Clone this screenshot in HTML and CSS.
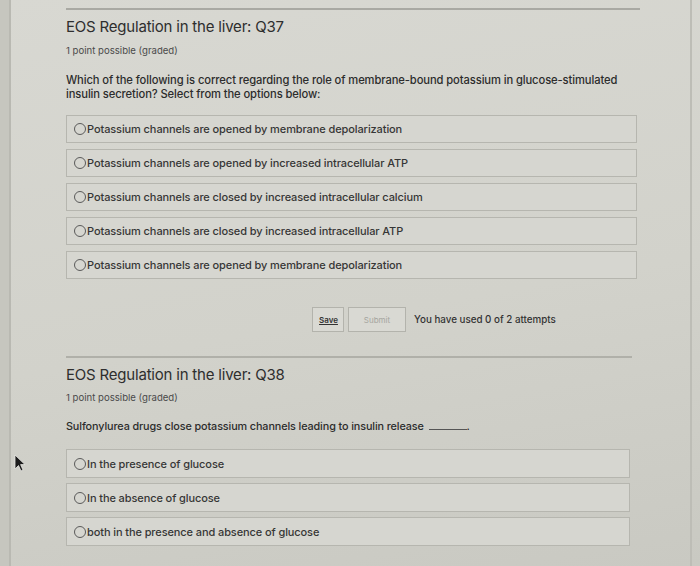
FILE: index.html
```html
<!DOCTYPE html>
<html lang="en">
<head>
    <meta charset="UTF-8">
    <meta name="viewport" content="width=device-width, initial-scale=1.0">
    <title>EOS Regulation in the liver</title>
    <link rel="stylesheet" href="styles.css">
</head>
<body>
    <div class="screen">
        <div class="side"></div>
        <div class="course">
            <div class="problem first">
                <h2>EOS Regulation in the liver: Q37</h2>
                <div class="meta">1 point possible (graded)</div>
                <p class="prompt">Which of the following is correct regarding the role of membrane-bound potassium in glucose-stimulated insulin secretion? Select from the options below:</p>
                <div class="choices">
                    <label class="choice"><span class="radio"></span>Potassium channels are opened by membrane depolarization</label>
                    <label class="choice"><span class="radio"></span>Potassium channels are opened by increased intracellular ATP</label>
                    <label class="choice"><span class="radio"></span>Potassium channels are closed by increased intracellular calcium</label>
                    <label class="choice"><span class="radio"></span>Potassium channels are closed by increased intracellular ATP</label>
                    <label class="choice"><span class="radio"></span>Potassium channels are opened by membrane depolarization</label>
                </div>
                <div class="actions">
                    <button class="save-button">Save</button>
                    <button class="submit-button">Submit</button>
                    <span class="attempts">You have used 0 of 2 attempts</span>
                </div>
            </div>
            <div class="problem second">
                <h2>EOS Regulation in the liver: Q38</h2>
                <div class="meta">1 point possible (graded)</div>
                <p class="prompt">Sulfonylurea drugs close potassium channels leading to insulin release <span class="blank"></span>.</p>
                <div class="choices">
                    <label class="choice"><span class="radio"></span>In the presence of glucose</label>
                    <label class="choice"><span class="radio"></span>In the absence of glucose</label>
                    <label class="choice"><span class="radio"></span>both in the presence and absence of glucose</label>
                </div>
            </div>
        </div>
    </div>
    <svg class="cursor" width="12" height="18" viewBox="0 0 12 18">
        <path d="M1 1 L1 15 L4.5 11.5 L7 17 L9 16 L6.6 10.6 L11 10.6 Z" fill="#1c1c1c" stroke="#e8e8e4" stroke-width="0.8"/>
    </svg>
</body>
</html>
```

FILE: styles.css
```css
body {
    margin: 0;
    font-family: 'Inter', 'Open Sans', sans-serif;
    color: #363636;
    background: linear-gradient(170deg, #d8d8d2 0%, #d2d2cb 55%, #c9c9c2 100%);
    height: 566px;
    overflow: hidden;
}
.screen {
    display: flex;
    height: 566px;
}
.side {
    width: 9px;
    background-color: #c6c6bf;
    border-right: 2px solid #b9b9b2;
}
.course {
    flex: 1;
    padding-left: 55px;
    border-right: 2px solid #bdbdb6;
    margin-right: 8px;
}
.problem {
    width: 574px;
}
.problem.first {
    margin-top: 8px;
    border-top: 2px solid #a9a9a3;
    padding-top: 8px;
}
.problem.second {
    width: 566px;
    margin-top: 24px;
    border-top: 2px solid #b0b0a9;
    padding-top: 8px;
}
h2 {
    margin: 0;
    font-size: 15px;
    font-weight: 400;
    line-height: 18px;
    color: #2e2e2e;
    letter-spacing: -0.2px;
}
.meta {
    margin-top: 9px;
    font-size: 9.6px;
    line-height: 12px;
    color: #4a4a4a;
}
.prompt {
    margin: 16px 0 0;
    font-size: 11.2px;
    font-weight: 500;
    line-height: 14px;
    color: #2c2c2c;
    letter-spacing: -0.1px;
}
.second .meta {
    margin-top: 8px;
}
.second .prompt {
    margin-top: 16px;
    font-size: 10.8px;
}
.blank {
    display: inline-block;
    width: 38px;
    border-bottom: 1px solid #555;
    margin-left: 2px;
}
.choices {
    margin-top: 14px;
    display: flex;
    flex-direction: column;
    gap: 6px;
    width: 571px;
}
.second .choices {
    margin-top: 15px;
    gap: 5px;
    width: 564px;
}
.choice {
    display: flex;
    align-items: center;
    height: 26px;
    padding-left: 7px;
    border: 1px solid #b6b6af;
    background-color: #d6d6d0;
    font-size: 11px;
    font-weight: 500;
    color: #363636;
    letter-spacing: -0.1px;
}
.second .choice {
    height: 27px;
}
.radio {
    width: 10px;
    height: 10px;
    border: 1.5px solid #5a5a5a;
    border-radius: 50%;
    margin-right: 1px;
    flex-shrink: 0;
}
.actions {
    display: flex;
    align-items: center;
    margin-top: 28px;
    padding-left: 246px;
}
.actions button {
    font-family: inherit;
    font-size: 8px;
    height: 25px;
    border: 1px solid #b3b3ac;
    background-color: #d9d9d3;
    cursor: pointer;
}
.save-button {
    width: 32px;
    font-weight: 600;
    color: #333;
    text-decoration: underline;
}
.submit-button {
    width: 58px;
    margin-left: 4px;
    color: #a6a6a0;
    border-color: #c3c3bc;
    background-color: #dbdbd5;
}
.attempts {
    margin-left: 8px;
    font-size: 9.8px;
    font-weight: 500;
    color: #333;
}
.cursor {
    position: absolute;
    left: 14px;
    top: 454px;
}
```
